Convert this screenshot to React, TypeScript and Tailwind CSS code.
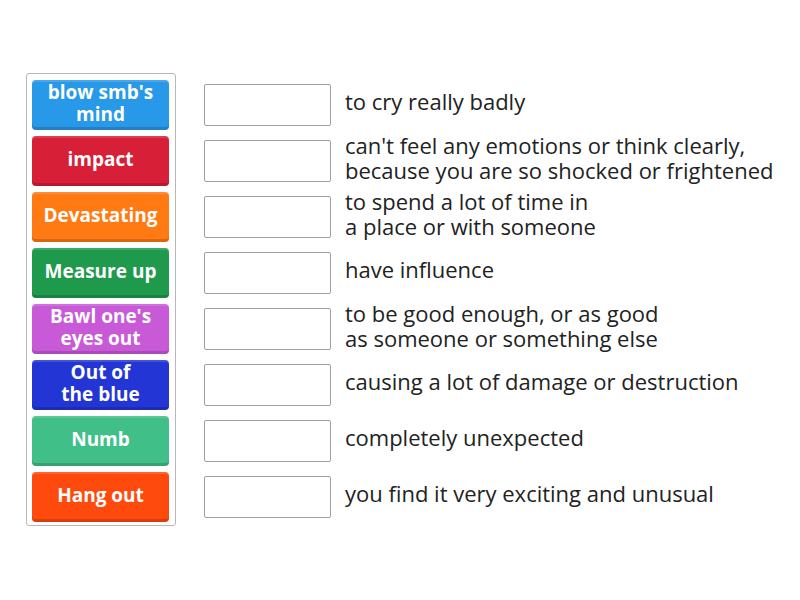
import React from "react";

const tiles: { text: string[]; bg: string }[] = [
  { text: ["blow smb's", "mind"], bg: "bg-[#2898e8]" },
  { text: ["impact"], bg: "bg-[#d81f38]" },
  { text: ["Devastating"], bg: "bg-[#ff7a12]" },
  { text: ["Measure up"], bg: "bg-[#1f9a4d]" },
  { text: ["Bawl one's", "eyes out"], bg: "bg-[#c85ad8]" },
  { text: ["Out of", "the blue"], bg: "bg-[#2336d5]" },
  { text: ["Numb"], bg: "bg-[#40bf89]" },
  { text: ["Hang out"], bg: "bg-[#ff4a0e]" },
];

const defs: string[][] = [
  ["to cry really badly"],
  ["can't feel any emotions or think clearly,", "because you are so shocked or frightened"],
  ["to spend a lot of time in", "a place or with someone"],
  ["have influence"],
  ["to be good enough, or as good", "as someone or something else"],
  ["causing a lot of damage or destruction"],
  ["completely unexpected"],
  ["you find it very exciting and unusual"],
];

export default function App() {
  return (
    <div
      className="w-[800px] h-[600px] bg-white relative"
      style={{ fontFamily: '"Open Sans", "Noto Sans", sans-serif' }}
    >
      <div className="flex pt-[73px] pl-[26px]">
        <div className="w-[150px] h-[453px] border border-[#b8b8b8] rounded-[3px] pt-[6px] pl-[5px] flex flex-col gap-[6px]">
          {tiles.map((t, i) => (
            <div
              key={i}
              className={`${t.bg} w-[137px] h-[50px] rounded-[4px] flex flex-col items-center justify-center pb-[4px] text-white font-bold text-[19px] leading-[22px] shadow-[inset_0_-3px_0_rgba(0,0,0,0.15),inset_0_2px_0_rgba(255,255,255,0.15)]`}
            >
              {t.text.map((l, j) => (
                <span key={j}>{l}</span>
              ))}
            </div>
          ))}
        </div>
        <div className="ml-[28px] pt-[7px] flex flex-col gap-[6px]">
          {defs.map((d, i) => (
            <div key={i} className="h-[50px] flex items-center">
              <div className="w-[127px] h-[42px] border border-[#a0a0a0] rounded-[2px] bg-white shrink-0" />
              <div className="ml-[14px] pb-[7px] text-[22px] leading-[25px] text-[#222]">
                {d.map((l, j) => (
                  <div key={j} className="whitespace-nowrap">{l}</div>
                ))}
              </div>
            </div>
          ))}
        </div>
      </div>
    </div>
  );
}
